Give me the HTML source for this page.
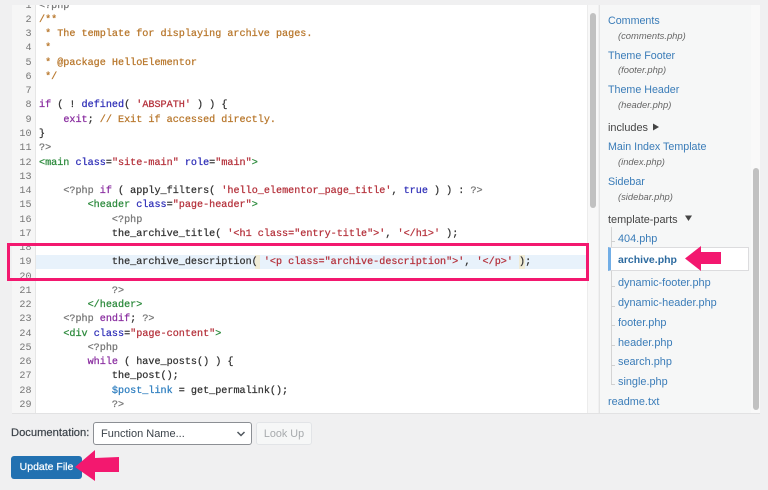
<!DOCTYPE html>
<html><head><meta charset="utf-8">
<style>
html,body{margin:0;padding:0;width:768px;height:490px;overflow:hidden;background:#f0f0f1;font-family:"Liberation Sans",sans-serif}
.a{position:absolute}
#wrap{position:absolute;left:0;top:0;width:768px;height:490px;overflow:hidden;filter:blur(.35px)}
#ed{left:12px;top:5px;width:586px;height:408px;background:#fff;overflow:hidden}
#gut{left:0;top:0;width:23px;height:408px;background:#f6f6f6;border-right:1px solid #e6e6e6}
.l{position:absolute;margin-top:2px;left:27px;white-space:pre;font:10.13px/14.26px "Liberation Mono",monospace;color:#333;-webkit-text-stroke:.25px currentColor}
.n{position:absolute;margin-top:2px;left:0;width:19.5px;text-align:right;font:10.08px/14.26px "Liberation Mono",monospace;color:#777}
.c{color:#b8772c}.k{color:#8a2ea0}.d{color:#3030b8}.s{color:#b5323c}.t{color:#2c8a3c}.m{color:#777}.v{color:#2f7fc0}
#side{left:599px;top:5px;width:151px;height:408px;background:#f6f7f7;border-left:1px solid #e4e4e4;border-right:1px solid #e8e8e8;box-sizing:content-box}
.f{position:absolute;white-space:nowrap;font-size:10.7px;line-height:14px;color:#3a7cb8}
.u{font-size:10.9px}
.i{position:absolute;white-space:nowrap;font-size:9.4px;line-height:13px;font-style:italic;color:#666}
.h{position:absolute;white-space:nowrap;font-size:10.9px;line-height:14px;color:#444}
.tick{position:absolute;left:611px;width:4px;height:1px;background:#d0d0d0}
</style></head><body>
<div id="wrap">
<div class="a" style="left:12px;top:413px;width:748px;height:1px;background:#e2e2e3"></div>
<div class="a" id="ed">
<div class="a" id="gut"></div>
<div class="a" style="left:24px;top:250px;width:550px;height:14.3px;background:#e8f2fb"></div>
<div class="a" style="left:243px;top:250px;width:5px;height:14.3px;background:#f0ecd6"></div>
<div class="a" style="left:507px;top:250px;width:6px;height:14.3px;background:#f0ecd6"></div>
<div class="n" style="top:-7.4px">1</div><div class="l m" style="top:-7.4px">&lt;?php</div>
<div class="n" style="top:6.9px">2</div><div class="l c" style="top:6.9px">/**</div>
<div class="n" style="top:21.1px">3</div><div class="l c" style="top:21.1px"> * The template for displaying archive pages.</div>
<div class="n" style="top:35.4px">4</div><div class="l c" style="top:35.4px"> *</div>
<div class="n" style="top:49.6px">5</div><div class="l c" style="top:49.6px"> * @package HelloElementor</div>
<div class="n" style="top:63.9px">6</div><div class="l c" style="top:63.9px"> */</div>
<div class="n" style="top:78.2px">7</div>
<div class="n" style="top:92.4px">8</div><div class="l" style="top:92.4px"><span class="k">if</span> ( ! <span class="d">defined</span>( <span class="s">'ABSPATH'</span> ) ) {</div>
<div class="n" style="top:106.7px">9</div><div class="l" style="top:106.7px">    <span class="k">exit</span>; <span class="c">// Exit if accessed directly.</span></div>
<div class="n" style="top:120.9px">10</div><div class="l" style="top:120.9px">}</div>
<div class="n" style="top:135.2px">11</div><div class="l m" style="top:135.2px">?&gt;</div>
<div class="n" style="top:149.5px">12</div><div class="l" style="top:149.5px"><span class="t">&lt;main</span> <span class="d">class</span>=<span class="s">"site-main"</span> <span class="d">role</span>=<span class="s">"main"</span><span class="t">&gt;</span></div>
<div class="n" style="top:163.7px">13</div>
<div class="n" style="top:178px">14</div><div class="l" style="top:178px">    <span class="m">&lt;?php</span> <span class="k">if</span> ( apply_filters( <span class="s">'hello_elementor_page_title'</span>, <span class="d">true</span> ) ) : <span class="m">?&gt;</span></div>
<div class="n" style="top:192.2px">15</div><div class="l" style="top:192.2px">        <span class="t">&lt;header</span> <span class="d">class</span>=<span class="s">"page-header"</span><span class="t">&gt;</span></div>
<div class="n" style="top:206.5px">16</div><div class="l m" style="top:206.5px">            &lt;?php</div>
<div class="n" style="top:220.8px">17</div><div class="l" style="top:220.8px">            the_archive_title( <span class="s">'&lt;h1 class="entry-title"&gt;'</span>, <span class="s">'&lt;/h1&gt;'</span> );</div>
<div class="n" style="top:235px">18</div>
<div class="n" style="top:249.3px">19</div><div class="l" style="top:249.3px">            the_archive_description( <span class="s">'&lt;p class="archive-description"&gt;'</span>, <span class="s">'&lt;/p&gt;'</span> );</div>
<div class="n" style="top:263.5px">20</div>
<div class="n" style="top:277.8px">21</div><div class="l m" style="top:277.8px">            ?&gt;</div>
<div class="n" style="top:292.1px">22</div><div class="l t" style="top:292.1px">        &lt;/header&gt;</div>
<div class="n" style="top:306.3px">23</div><div class="l" style="top:306.3px">    <span class="m">&lt;?php</span> <span class="k">endif</span>; <span class="m">?&gt;</span></div>
<div class="n" style="top:320.6px">24</div><div class="l" style="top:320.6px">    <span class="t">&lt;div</span> <span class="d">class</span>=<span class="s">"page-content"</span><span class="t">&gt;</span></div>
<div class="n" style="top:334.8px">25</div><div class="l m" style="top:334.8px">        &lt;?php</div>
<div class="n" style="top:349.1px">26</div><div class="l" style="top:349.1px">        <span class="k">while</span> ( have_posts() ) {</div>
<div class="n" style="top:363.4px">27</div><div class="l" style="top:363.4px">            the_post();</div>
<div class="n" style="top:377.6px">28</div><div class="l" style="top:377.6px">            <span class="v">$post_link</span> = get_permalink();</div>
<div class="n" style="top:391.9px">29</div><div class="l m" style="top:391.9px">            ?&gt;</div>
<div class="a" style="left:575px;top:0;width:11px;height:408px;background:#f8f8f8;border-left:1px solid #ececec"></div>
<div class="a" style="left:578px;top:8px;width:6px;height:195px;border-radius:3px;background:#c1c1c1"></div>
</div>

<div class="a" id="side"></div>
<div class="a" style="left:751px;top:5px;width:9px;height:408px;background:#f9f9f9"></div>
<div class="a" style="left:753px;top:168px;width:6px;height:242px;border-radius:3px;background:#c1c1c1"></div>

<div class="f" style="left:608px;top:14px">Comments</div>
<div class="i" style="left:618px;top:29px">(comments.php)</div>
<div class="f" style="left:608px;top:49px">Theme Footer</div>
<div class="i" style="left:618px;top:63px">(footer.php)</div>
<div class="f" style="left:608px;top:83px">Theme Header</div>
<div class="i" style="left:618px;top:98px">(header.php)</div>
<div class="h" style="left:608px;top:121px">includes</div>
<svg class="a" style="left:652px;top:122px" width="8" height="10"><path d="M1 1.5L7 5L1 8.5Z" fill="#444"/></svg>
<div class="f" style="left:608px;top:140px">Main Index Template</div>
<div class="i" style="left:618px;top:155px">(index.php)</div>
<div class="f" style="left:608px;top:175px">Sidebar</div>
<div class="i" style="left:618px;top:190px">(sidebar.php)</div>
<div class="h" style="left:608px;top:213px">template-parts</div>
<svg class="a" style="left:684px;top:214px" width="10" height="9"><path d="M1 1.5L8 1.5L4.5 7Z" fill="#444"/></svg>

<div class="a" style="left:610.5px;top:227px;width:1px;height:158px;background:#d4d4d4"></div>
<div class="tick" style="top:241px"></div>
<div class="tick" style="top:286px"></div><div class="tick" style="top:306px"></div><div class="tick" style="top:325px"></div><div class="tick" style="top:345px"></div><div class="tick" style="top:365px"></div><div class="tick" style="top:384px"></div>

<div class="a" style="left:608px;top:247px;height:24px;background:#fff;border:1px solid #dcdcde;border-left:3px solid #72aee6;box-sizing:border-box;width:141px"></div>
<div class="f u" style="left:618px;top:232px">404.php</div>
<div class="f" style="left:618px;top:253px;font-weight:bold;font-size:10.5px;color:#2c6a9f">archive.php</div>
<div class="f u" style="left:618px;top:276px">dynamic-footer.php</div>
<div class="f u" style="left:618px;top:296px">dynamic-header.php</div>
<div class="f u" style="left:618px;top:316px">footer.php</div>
<div class="f u" style="left:618px;top:336px">header.php</div>
<div class="f u" style="left:618px;top:355px">search.php</div>
<div class="f u" style="left:618px;top:375px">single.php</div>
<div class="f u" style="left:608px;top:395px">readme.txt</div>

<svg class="a" style="left:680px;top:240px" width="46" height="36"><path d="M5 18.5L21 6L21 12L41 12L41 24L21 24L21 31Z" fill="#f3186f"/></svg>

<div class="a" style="left:7px;top:243px;width:582px;height:38px;box-sizing:border-box;border:3px solid #f3186f"></div>

<div class="a" style="left:11px;top:426px;font-size:11.2px;line-height:14px;color:#3c434a;white-space:nowrap;-webkit-text-stroke:.2px #3c434a">Documentation:</div>
<div class="a" style="left:93px;top:422px;width:159px;height:23px;box-sizing:border-box;background:#fff;border:1px solid #8c8f94;border-radius:3px;font-size:11px;line-height:23px;padding-left:7px;color:#3c434a;white-space:nowrap">Function Name...</div>
<svg class="a" style="left:236px;top:430px" width="11" height="8"><path d="M1.5 2L5 5.5L8.5 2" fill="none" stroke="#50575e" stroke-width="1.5"/></svg>
<div class="a" style="left:256px;top:422px;width:56px;height:23px;box-sizing:border-box;background:#f6f7f7;border:1px solid #e2e4e7;border-radius:3px;font-size:10.8px;line-height:23px;text-align:center;color:#a7aaad;white-space:nowrap">Look Up</div>
<div class="a" style="left:11px;top:456px;width:71px;height:23px;background:#2271b1;border-radius:3px;font-size:10.5px;line-height:23px;text-align:center;color:#fff;white-space:nowrap;-webkit-text-stroke:.2px #fff">Update File</div>
<svg class="a" style="left:70px;top:445px" width="54" height="40"><path d="M5 22L25 5L25 13L49 12L49 27L25 27L25 36Z" fill="#f3186f"/></svg>
</div>
</body></html>
